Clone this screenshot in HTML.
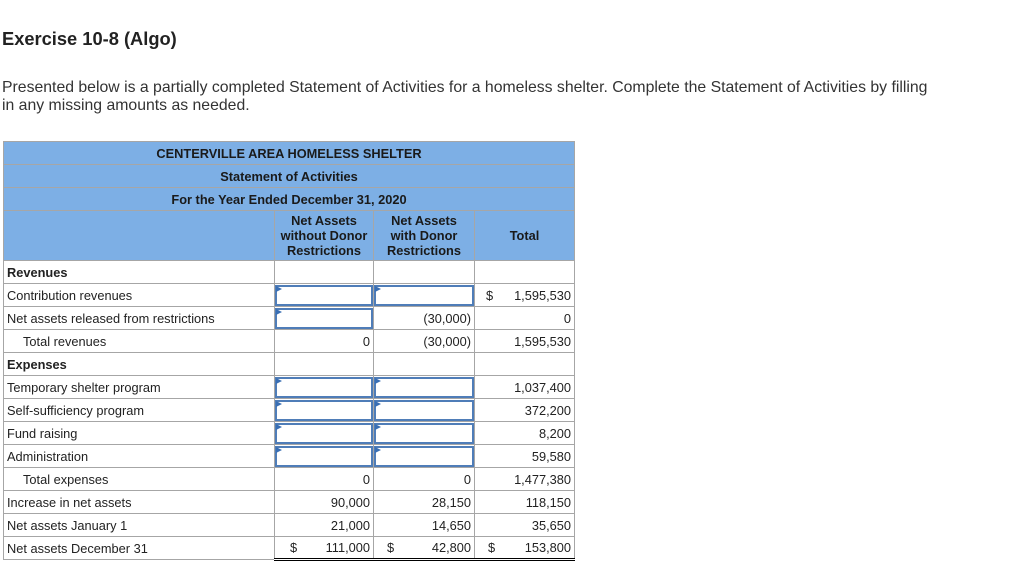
<!DOCTYPE html>
<html><head><meta charset="utf-8"><style>
body{margin:0;background:#fff;font-family:"Liberation Sans",Arial,sans-serif;width:1026px;height:574px;overflow:hidden;position:relative}
h1{position:absolute;left:2px;top:28px;margin:0;font-size:18.3px;font-weight:bold;color:#222}
p{position:absolute;left:2px;top:79px;margin:0;font-size:15.8px;line-height:18px;color:#333;width:932px}
table{position:absolute;left:3px;top:141px;border-collapse:collapse;table-layout:fixed;font-size:12.8px;color:#222}
td{border:1px solid #a6a6a6;height:23px;padding:0 3px;white-space:nowrap;box-sizing:border-box;overflow:hidden}
.h td{background:#7dafe5;text-align:center;height:23px;font-weight:bold;color:#1a1a1a}
.hd td{height:50px;line-height:15px}
.r{text-align:right}
.b{font-weight:bold}
.in{padding:0}
.in div{height:21px;box-sizing:border-box;border:2px solid #4f7db8;position:relative}
.in div:before{content:"";position:absolute;left:-1px;top:-1px;border-left:6px solid #3a6fb4;border-top:3px solid transparent;border-bottom:3px solid transparent}
.ind{padding-left:19px}
.tt{border-top:1px solid #000}
.dd{border-bottom:3px double #000}
.s{display:flex;justify-content:space-between}
</style></head><body>
<h1>Exercise 10-8 (Algo)</h1>
<p>Presented below is a partially completed Statement of Activities for a homeless shelter. Complete the Statement of Activities by filling in any missing amounts as needed.</p>
<table>
<colgroup><col style="width:271px"><col style="width:99px"><col style="width:101px"><col style="width:100px"></colgroup>
<tr class="h"><td colspan="4">CENTERVILLE AREA HOMELESS SHELTER</td></tr>
<tr class="h"><td colspan="4">Statement of Activities</td></tr>
<tr class="h"><td colspan="4">For the Year Ended December 31, 2020</td></tr>
<tr class="h hd"><td></td><td>Net Assets<br>without Donor<br>Restrictions</td><td>Net Assets<br>with Donor<br>Restrictions</td><td>Total</td></tr>
<tr><td class="b">Revenues</td><td></td><td></td><td></td></tr>
<tr><td>Contribution revenues</td><td class="in"><div></div></td><td class="in"><div></div></td><td><div class="s"><span style="padding-left:8px">$</span><span>1,595,530</span></div></td></tr>
<tr><td>Net assets released from restrictions</td><td class="in"><div></div></td><td class="r">(30,000)</td><td class="r">0</td></tr>
<tr><td class="ind">Total revenues</td><td class="r tt">0</td><td class="r tt">(30,000)</td><td class="r tt">1,595,530</td></tr>
<tr><td class="b">Expenses</td><td></td><td></td><td></td></tr>
<tr><td>Temporary shelter program</td><td class="in"><div></div></td><td class="in"><div></div></td><td class="r">1,037,400</td></tr>
<tr><td>Self-sufficiency program</td><td class="in"><div></div></td><td class="in"><div></div></td><td class="r">372,200</td></tr>
<tr><td>Fund raising</td><td class="in"><div></div></td><td class="in"><div></div></td><td class="r">8,200</td></tr>
<tr><td>Administration</td><td class="in"><div></div></td><td class="in"><div></div></td><td class="r">59,580</td></tr>
<tr><td class="ind">Total expenses</td><td class="r tt">0</td><td class="r tt">0</td><td class="r tt">1,477,380</td></tr>
<tr><td>Increase in net assets</td><td class="r">90,000</td><td class="r">28,150</td><td class="r">118,150</td></tr>
<tr><td>Net assets January 1</td><td class="r">21,000</td><td class="r">14,650</td><td class="r">35,650</td></tr>
<tr><td>Net assets December 31</td><td class="tt dd"><div class="s"><span style="padding-left:12px">$</span><span>111,000</span></div></td><td class="tt dd"><div class="s"><span style="padding-left:10px">$</span><span>42,800</span></div></td><td class="tt dd"><div class="s"><span style="padding-left:10px">$</span><span>153,800</span></div></td></tr>
</table>
</body></html>
